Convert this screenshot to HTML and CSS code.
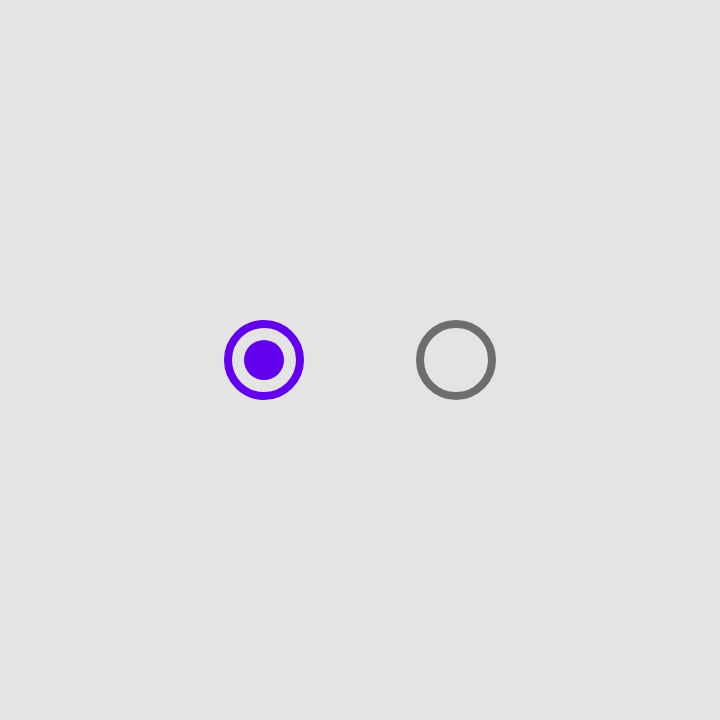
FILE: index.html
```html
<!DOCTYPE html>
<html>
<head>
<meta charset="utf-8">
<link rel="stylesheet" href="styles.css">
</head>
<body>
<div class="row">
  <div class="radio checked"><div class="dot"></div></div>
  <div class="radio"></div>
</div>
</body>
</html>
```
FILE: styles.css
```css
html, body {
  margin: 0;
  padding: 0;
  background: #e4e4e4;
  font-family: "Roboto", sans-serif;
}
.row {
  height: 720px;
  width: 720px;
  display: flex;
  align-items: center;
  justify-content: center;
  gap: 112px;
}
.radio {
  width: 80px;
  height: 80px;
  box-sizing: border-box;
  border: 8px solid #6d6d6d;
  border-radius: 50%;
  display: flex;
  align-items: center;
  justify-content: center;
}
.radio.checked {
  border-color: #6200ee;
}
.dot {
  width: 40px;
  height: 40px;
  border-radius: 50%;
  background: #6200ee;
}
```
